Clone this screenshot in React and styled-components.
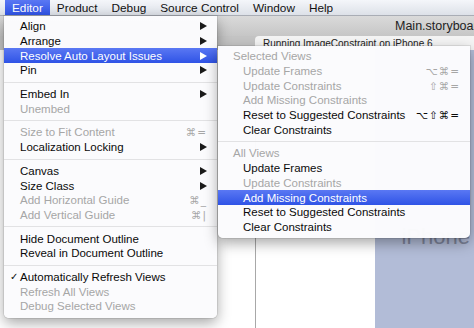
import React from 'react';
import styled, { createGlobalStyle } from 'styled-components';

const Global = createGlobalStyle`
  html, body { margin: 0; padding: 0; }
  body { font-family: "Liberation Sans", Arial, sans-serif; }
`;

const Screen = styled.div`
  position: relative;
  width: 474px;
  height: 328px;
  overflow: hidden;
  display: flex;
  flex-direction: column;
  background: #ececec;
`;

const MenuBar = styled.div`
  height: 16px;
  display: flex;
  align-items: stretch;
  padding-left: 5px;
  background: linear-gradient(#f4f6fa, #dde1e8);
  border-bottom: 1px solid #a9adb5;
  box-sizing: border-box;
  font-size: 11.8px;
  color: #111;
`;

const BarItem = styled.div`
  display: flex;
  align-items: center;
  padding: 0 7px;
  color: ${p => (p.$open ? '#fff' : '#111')};
  background: ${p => (p.$open ? 'linear-gradient(#5a78f3, #2f53e6)' : 'transparent')};
`;

const Window = styled.div`
  flex: 1;
  display: flex;
  flex-direction: column;
`;

const TitleBar = styled.div`
  height: 20px;
  display: flex;
  align-items: center;
  padding-left: 393px;
  gap: 2px;
  background: linear-gradient(#dadada, #c6c6c6);
  font-size: 12.5px;
  color: #222;
  white-space: nowrap;
`;

const Toolbar = styled.div`
  height: 14px;
  display: flex;
  background: #c4c4c4;
  padding-left: 255px;
`;

const Activity = styled.div`
  flex: 1;
  background: #f4f4f4;
  border-top-left-radius: 4px;
  padding: 2px 0 0 8px;
  font-size: 10px;
  color: #222;
  white-space: nowrap;
`;

const Content = styled.div`
  flex: 1;
  display: flex;
  background: #fff;
`;

const Outline = styled.div`
  width: 255px;
  border-right: 1px solid #a8a8a8;
  background: #fff;
`;

const Canvas = styled.div`
  width: 119px;
  background: #fff;
`;

const Scene = styled.div`
  flex: 1;
  background: #b2bcd7;
  display: flex;
  justify-content: flex-end;
  padding: 176px 4px 0 0;
  font-size: 22px;
  color: #7d849a;
  line-height: 1;
`;

const Menu = styled.div`
  position: absolute;
  top: ${p => p.$top}px;
  left: ${p => p.$left}px;
  width: ${p => p.$width}px;
  padding: 3px 0 4px;
  background: rgba(251, 251, 253, 0.98);
  border-radius: 0 0 5px 5px;
  box-shadow: 0 5px 14px rgba(0, 0, 0, 0.35), 0 0 0 1px rgba(0, 0, 0, 0.08);
  font-size: 11.5px;
`;

const Row = styled.div`
  position: relative;
  height: 14.7px;
  display: flex;
  align-items: center;
  padding: 0 10px 0 ${p => p.$indent}px;
  white-space: nowrap;
  color: ${p => (p.$active ? '#fff' : p.$dim ? '#a6a6a6' : '#0a0a0a')};
  background: ${p => (p.$active ? 'linear-gradient(#5a78f3, #2f53e6)' : 'transparent')};
`;

const Label = styled.span`
  flex: 1;
`;

const Check = styled.span`
  position: absolute;
  left: 6px;
  font-family: "DejaVu Sans", sans-serif;
  font-size: 10px;
`;

const Keys = styled.span`
  font-family: "DejaVu Sans", sans-serif;
  font-size: 10.5px;
  letter-spacing: 1px;
`;

const Separator = styled.div`
  height: 1px;
  margin: 4px 0;
  background: #e2e2e4;
`;

const Arrow = ({ color }) => (
  <svg width="7" height="8" viewBox="0 0 7 8">
    <polygon points="0,0 7,4 0,8" fill={color} />
  </svg>
);

const DocIcon = () => (
  <svg width="9" height="11" viewBox="0 0 9 11">
    <path d="M0.5 0.5h5.5l2.5 2.5v7.5h-8z" fill="#f3e3a4" stroke="#b89b45" />
    <path d="M6 0.5v2.5h2.5" fill="none" stroke="#b89b45" />
  </svg>
);

const mainItems = [
  { t: 'Align', sub: true },
  { t: 'Arrange', sub: true },
  { t: 'Resolve Auto Layout Issues', sub: true, active: true },
  { t: 'Pin', sub: true },
  '-',
  { t: 'Embed In', sub: true },
  { t: 'Unembed', dim: true },
  '-',
  { t: 'Size to Fit Content', dim: true, keys: '⌘=' },
  { t: 'Localization Locking', sub: true },
  '-',
  { t: 'Canvas', sub: true },
  { t: 'Size Class', sub: true },
  { t: 'Add Horizontal Guide', dim: true, keys: '⌘_' },
  { t: 'Add Vertical Guide', dim: true, keys: '⌘|' },
  '-',
  { t: 'Hide Document Outline' },
  { t: 'Reveal in Document Outline' },
  '-',
  { t: 'Automatically Refresh Views', check: true },
  { t: 'Refresh All Views', dim: true },
  { t: 'Debug Selected Views', dim: true },
];

const subItems = [
  { t: 'Selected Views', dim: true, head: true },
  { t: 'Update Frames', dim: true, keys: '⌥⌘=' },
  { t: 'Update Constraints', dim: true, keys: '⇧⌘=' },
  { t: 'Add Missing Constraints', dim: true },
  { t: 'Reset to Suggested Constraints', keys: '⌥⇧⌘=' },
  { t: 'Clear Constraints' },
  '-',
  { t: 'All Views', dim: true, head: true },
  { t: 'Update Frames' },
  { t: 'Update Constraints', dim: true },
  { t: 'Add Missing Constraints', active: true },
  { t: 'Reset to Suggested Constraints' },
  { t: 'Clear Constraints' },
];

function MenuList({ items, indent, headIndent }) {
  return items.map((it, i) => {
    if (it === '-') return <Separator key={i} />;
    return (
      <Row
        key={i}
        $indent={it.head ? headIndent : indent}
        $dim={it.dim}
        $active={it.active}
      >
        {it.check && <Check>✓</Check>}
        <Label>{it.t}</Label>
        {it.keys && <Keys>{it.keys}</Keys>}
        {it.sub && <Arrow color={it.active ? '#fff' : '#1a1a1a'} />}
      </Row>
    );
  });
}

export default function App() {
  return (
    <>
      <Global />
      <Screen>
        <MenuBar>
          <BarItem $open>Editor</BarItem>
          <BarItem>Product</BarItem>
          <BarItem>Debug</BarItem>
          <BarItem>Source Control</BarItem>
          <BarItem>Window</BarItem>
          <BarItem>Help</BarItem>
        </MenuBar>
        <Window>
          <TitleBar>
            <DocIcon />
            Main.storyboard
          </TitleBar>
          <Toolbar>
            <Activity>Running ImageConstraint on iPhone 6</Activity>
          </Toolbar>
          <Content>
            <Outline />
            <Canvas />
            <Scene>iPhone</Scene>
          </Content>
        </Window>

        <Menu $top={16} $left={4} $width={213}>
          <MenuList items={mainItems} indent={16} headIndent={16} />
        </Menu>
        <Menu $top={46} $left={218} $width={252}>
          <MenuList items={subItems} indent={25} headIndent={15} />
        </Menu>
      </Screen>
    </>
  );
}
